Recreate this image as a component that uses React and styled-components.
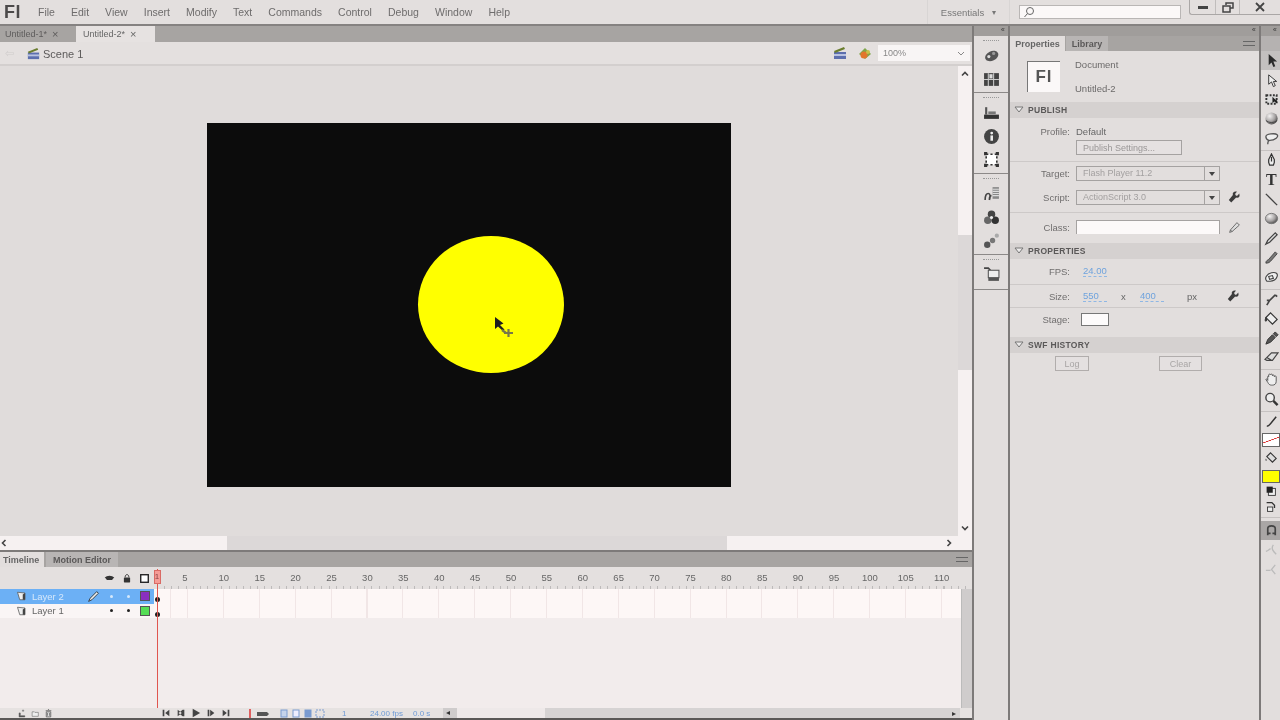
import React from "react";
import styled, { createGlobalStyle } from "styled-components";

const Global = createGlobalStyle`
	html, body { margin: 0; padding: 0; background: #e2dedd; overflow: hidden; }
	* { box-sizing: border-box; }
`;

const MENU = ["File", "Edit", "View", "Insert", "Modify", "Text", "Commands", "Control", "Debug", "Window", "Help"];
const RULER = [5, 10, 15, 20, 25, 30, 35, 40, 45, 50, 55, 60, 65, 70, 75, 80, 85, 90, 95, 100, 105, 110];

const Svg = ({ s = 16, children }) => (
	<svg width={s} height={s} viewBox="0 0 16 16">
		<defs>
			<radialGradient id="ball" cx="35%" cy="30%" r="75%">
				<stop offset="0" stopColor="#f4f2f2" />
				<stop offset="0.6" stopColor="#a5a2a2" />
				<stop offset="1" stopColor="#4a4848" />
			</radialGradient>
		</defs>
		{children}
	</svg>
);

const ICONS = {
	arrow: <path d="M5 1v12l3-3 2 5 2-1-2-5h4z" fill="#2a2a2a" />,
	sub: <path d="M5 2v10l3-2.500 2 5 2-1-2-4.500h3.500z" fill="#eee" stroke="#333" />,
	free: (
		<>
			<rect x="2.500" y="3.500" width="11" height="9" fill="#ddd" stroke="#333" strokeDasharray="2 1.500" strokeWidth="2" />
			<path d="M9 5v7l2-2 3 2 0-3-2-1z" fill="#222" />
		</>
	),
	sphere: (
		<>
			<circle cx="8" cy="8" r="6.500" fill="url(#ball)" />
			<path d="M2 10c3 3 9 3 12 0" stroke="#444" fill="none" />
		</>
	),
	lasso: <path d="M2 6c0-3 10-4 12-2s-2 6-8 6c-1 0-2 1-2 4M2 6c0 2 1 3 3 4" fill="#eee" stroke="#555" strokeWidth="1.400" />,
	pen: <path d="M8 1l3 6 0 3-1 3H6l-1-3 0-3zM8 4v5" fill="#eee" stroke="#333" strokeWidth="1.300" />,
	line: <path d="M2 2l12 12" stroke="#444" strokeWidth="1.500" />,
	oval: <ellipse cx="8" cy="8" rx="6.500" ry="5.500" fill="url(#ball)" stroke="#777" />,
	pencil: <path d="M2 14l2-4 8-8 2 2-8 8zM2 14l2-4" fill="#ddd" stroke="#444" strokeWidth="1.300" />,
	brush: <path d="M2 14c0-3 2-3 3-4l7-8 2 2-7 8c-1 1-2 2-5 2z" fill="#777" stroke="#444" />,
	deco: <path d="M3 13c-3-3 0-8 5-9s7 1 6 4-4 5-8 5zM5 8l4-1 1 3-4 1z" fill="#eee" stroke="#444" strokeWidth="1.200" />,
	bone: <path d="M3 14l3-5 6-6M6 9l-3 0M12 3l2 2" fill="none" stroke="#444" strokeWidth="1.800" />,
	bucket: (
		<>
			<path d="M7 2l7 7-5 5-7-7z" fill="#eee" stroke="#333" strokeWidth="1.300" />
			<path d="M2 7c-1 2-1 4 0 4s1-2 0-4" fill="#333" stroke="#333" />
		</>
	),
	dropper: <path d="M2 14l2-5 5-5 3 3-5 5zM10 3l2-2 3 3-2 2z" fill="#555" stroke="#333" />,
	eraser: <path d="M1 10l7-7h7l-6 8H3zM3 8l5 3" fill="#ddd" stroke="#444" strokeWidth="1.200" />,
	hand: <path d="M4 9V5c0-1 1-1 1 0V3c0-1 2-1 2 0v0c0-1 2-1 2 0v1c0-1 2-1 2 0v1c0-1 2-1 2 0v5c0 3-2 4-4 4H8c-2 0-3-1-4-3L2 8c0-1 1-1 2 1z" fill="#eee" stroke="#555" />,
	zoom: (
		<>
			<circle cx="6.500" cy="6" r="4.500" fill="#eee" stroke="#444" strokeWidth="1.500" />
			<path d="M10 9.500l4.500 4.500" stroke="#333" strokeWidth="2.500" />
		</>
	),
	strokePen: <path d="M3 13c3 0 3-2 5-4l5-6" stroke="#333" strokeWidth="1.600" fill="none" />,
	fillPot: (
		<>
			<path d="M7 3l6 6-4 4-6-6z" fill="#ddd" stroke="#333" strokeWidth="1.200" />
			<path d="M2 9c-1 2 0 3 1 2z" fill="#333" />
		</>
	),
	bw: (
		<>
			<rect x="5" y="5" width="8" height="8" fill="#eee" stroke="#333" />
			<rect x="3" y="3" width="7" height="7" fill="#222" />
		</>
	),
	swap: (
		<>
			<path d="M3 3h6l3 3v3" fill="none" stroke="#333" strokeWidth="1.500" />
			<rect x="4" y="8" width="6" height="5" fill="#eee" stroke="#333" />
		</>
	),
	magnet: <path d="M4 13V6c0-4 8-4 8 0v7M4 11h3M9 11h3" fill="none" stroke="#444" strokeWidth="1.800" />,
	smooth: <path d="M2 10c3-1 3-2 5-3M10 3c-3 4 0 7 3 10" fill="none" stroke="#bbb" strokeWidth="1.400" />,
	straight: <path d="M2 9h5M12 3L8 8l4 5" fill="none" stroke="#bbb" strokeWidth="1.400" />,
	palette: (
		<>
			<ellipse cx="8" cy="8.500" rx="6.500" ry="4.500" fill="#555" transform="rotate(-25 8 8)" />
			<circle cx="5.500" cy="9" r="1.500" fill="#ddd" />
			<circle cx="10" cy="6" r="1.500" fill="#999" />
		</>
	),
	grid: (
		<>
			<rect x="1" y="2" width="14" height="12" fill="#444" />
			<path d="M5 2v12M10 2v12M1 8h14" stroke="#ccc" />
			<rect x="6" y="3" width="3" height="4" fill="#ddd" />
		</>
	),
	align: (
		<>
			<rect x="1" y="10" width="14" height="4" fill="#333" />
			<rect x="2" y="3" width="2" height="7" fill="#555" />
			<rect x="5" y="7" width="7" height="2.500" fill="#777" />
		</>
	),
	info: (
		<>
			<circle cx="8" cy="8" r="7" fill="#444" />
			<rect x="7" y="7" width="2.400" height="5" fill="#eee" />
			<circle cx="8.200" cy="4.800" r="1.300" fill="#eee" />
		</>
	),
	transform: (
		<>
			<rect x="3" y="3" width="10" height="10" fill="#fff" stroke="#333" strokeDasharray="2 2" strokeWidth="1.500" />
			<path d="M1 1h3v3H1zM12 1h3v3h-3zM1 12h3v3H1zM12 12h3v3h-3z" fill="#333" />
		</>
	),
	code: (
		<>
			<rect x="9" y="2" width="6" height="11" fill="#888" />
			<path d="M9 4h6M9 6h6M9 8h6M9 10h6" stroke="#ddd" />
			<path d="M2 14c0-4 1-6 3-6s2 3 1 6M6 14c0-3 1-4 2-4" fill="none" stroke="#444" strokeWidth="1.500" />
		</>
	),
	cluster: (
		<>
			<circle cx="8" cy="5" r="3.500" fill="#444" />
			<circle cx="4.500" cy="10.500" r="3.500" fill="#666" />
			<circle cx="11.500" cy="10.500" r="3.500" fill="#333" />
			<circle cx="8" cy="8" r="1.500" fill="#eee" />
		</>
	),
	nodes: (
		<>
			<circle cx="4" cy="12" r="3" fill="#555" />
			<circle cx="9" cy="8" r="2.500" fill="#777" />
			<circle cx="13" cy="3.500" r="2" fill="#aaa" />
		</>
	),
	folder: (
		<>
			<path d="M1 2h4l2 2" fill="none" stroke="#444" strokeWidth="1.500" />
			<rect x="5" y="4" width="10" height="7" fill="#eee" stroke="#555" />
			<rect x="5" y="11" width="10" height="3" fill="#555" />
		</>
	),
	clapper: (
		<>
			<rect x="2" y="7" width="12" height="7" fill="#5d6fae" />
			<rect x="2" y="9" width="12" height="2" fill="#b9c2e0" />
			<path d="M2 6l10-4 1 2-10 4z" fill="#6a7d2e" />
		</>
	),
	symbol: (
		<>
			<path d="M2 9l6-6 6 6-6 5z" fill="#7fa64a" />
			<circle cx="7" cy="10" r="3.500" fill="#e2762c" />
			<circle cx="11" cy="7" r="2" fill="#c9c04a" />
		</>
	),
	wrench: <path d="M14 3l-3 3-2-1V3l2-2c-3-1-6 1-5 4l-5 6 3 3 6-6c3 1 5-1 4-4z" fill="#3c3c3c" />,
	dropperSmall: <path d="M2 14l1-3 8-9 3 3-9 8zM3 11l2 2" fill="#ddd" stroke="#555" />,
	layer: (
		<>
			<path d="M2 3l10 1v9H5z" fill="#eee" stroke="#555" />
			<path d="M12 4v9H9V6z" fill="#444" />
		</>
	),
	penSmall: <path d="M2 14l2-4 8-8 2 2-8 8z" fill="#eee" stroke="#222" />,
	eye: <path d="M1 7c3-4 11-4 14 0-2 1-3 3-3 3H4S3 8 1 7z" fill="#333" />,
	lock: (
		<>
			<rect x="3" y="7" width="10" height="8" rx="1" fill="#333" />
			<path d="M5 7c0-6 6-6 6 0" stroke="#333" strokeWidth="1.500" fill="none" />
		</>
	),
	outline: <rect x="2.500" y="2.500" width="11" height="11" fill="#fff" stroke="#222" strokeWidth="2" />,
	newLayer: <path d="M2 14V7h2v5h8v2zM7 3h4M9 1v4" fill="#555" stroke="#555" />,
	newFolder: <path d="M2 5h4l1 1h6v7H2z" fill="#eee" stroke="#666" />,
	trash: <path d="M4 5h8v9H4zM3 3h10M7 1h2M6 7v5M10 7v5" fill="#ddd" stroke="#555" strokeWidth="1.300" />,
};

const TOOLS = [
	["arrow", "sub", "free", "sphere", "lasso"],
	["pen", "T", "line", "oval", "pencil", "brush", "deco"],
	["bone", "bucket", "dropper", "eraser"],
	["hand", "zoom"],
];

const TRANSPORT = [
	"M2 2h2v8H2zM10 2v8L5 6z",
	"M2 2v8L7 6zM8 2v8L3 6zM8 2h2v8H8z",
	"M2 1v10l9-5z",
	"M2 2h2v8H2zM5 2v8l5-4z",
	"M2 2v8l5-4zM8 2h2v8H8z",
];

const Icon = ({ name, s }) => <Svg s={s}>{ICONS[name]}</Svg>;

const Chevron = () => (
	<svg width="10" height="7" viewBox="0 0 10 7">
		<path d="M1 1h8L5 6z" fill="#eceaea" stroke="#777" />
	</svg>
);

const ScrollChevron = ({ rotate = 0 }) => (
	<svg width="8" height="8" viewBox="0 0 8 8" style={{ transform: `rotate(${rotate}deg)` }}>
		<path d="M1 5.500l3-3 3 3" fill="none" stroke="#444" strokeWidth="1.600" />
	</svg>
);

const Section = ({ title }) => (
	<SectionHead>
		<Chevron />
		{title}
	</SectionHead>
);

const Select = ({ children }) => (
	<SelectBox>
		{children}
		<SelectArrow />
	</SelectBox>
);

const LayerLine = ({ name, color, selected }) => (
	<LayerRow $selected={selected}>
		<Icon name="layer" s={12} />
		<LayerName>{name}</LayerName>
		<PenSlot>{selected && <Icon name="penSmall" s={13} />}</PenSlot>
		<DotCell><LayerDot $selected={selected} /></DotCell>
		<DotCell><LayerDot $selected={selected} /></DotCell>
		<LayerColor $color={color} />
	</LayerRow>
);

export default function App() {
	return (
		<Page>
			<Global />
			<MenuBar>
				<Logo>Fl</Logo>
				{MENU.map((m) => (
					<MenuItem key={m}>{m}</MenuItem>
				))}
				<Spacer />
				<Workspace>
					Essentials <small>▾</small>
				</Workspace>
				<SearchBox>
					<svg width="12" height="12" viewBox="0 0 12 12">
						<circle cx="7" cy="5" r="3.500" fill="none" stroke="#666" />
						<path d="M4.500 7.500L1.500 11" stroke="#666" />
					</svg>
				</SearchBox>
				<WindowButtons>
					<WinBtn $w={26}>
						<svg width="10" height="4"><rect width="10" height="3" y="1" fill="#444" /></svg>
					</WinBtn>
					<WinBtn $w={24}>
						<svg width="12" height="11" viewBox="0 0 12 11">
							<path d="M4 3V1h7v5H8" fill="none" stroke="#444" strokeWidth="1.500" />
							<rect x="1" y="4" width="7" height="6" fill="none" stroke="#444" strokeWidth="1.500" />
						</svg>
					</WinBtn>
					<WinBtn $w={41}>
						<svg width="10" height="10" viewBox="0 0 10 10">
							<path d="M1 1l8 8M9 1l-8 8" stroke="#444" strokeWidth="1.800" />
						</svg>
					</WinBtn>
				</WindowButtons>
			</MenuBar>

			<Main>
				<LeftColumn>
					<DocTabs>
						<DocTab>Untitled-1* <b>×</b></DocTab>
						<DocTab $active>Untitled-2* <b>×</b></DocTab>
					</DocTabs>
					<SceneBar>
						<BackArrow>⇦</BackArrow>
						<Icon name="clapper" s={15} />
						<SceneName>Scene 1</SceneName>
						<Spacer />
						<Icon name="clapper" s={16} />
						<SceneGap />
						<Icon name="symbol" s={16} />
						<ZoomBox>
							100%
							<svg width="8" height="5" viewBox="0 0 8 5">
								<path d="M1 1l3 3 3-3" fill="none" stroke="#888" />
							</svg>
						</ZoomBox>
					</SceneBar>
					<Canvas>
						<Pasteboard>
							<Stage>
								<Circle />
								<Cursor>
									<svg width="24" height="24" viewBox="0 0 24 24">
										<path d="M1 1v12l3-2.500 5 4.500 1.500-1.500-4.500-4.500 3.500-1.500z" fill="#1e1e1e" />
										<path d="M8 14l4 3M10 17h9M14.500 13v8" stroke="#77774a" strokeWidth="2.200" />
									</svg>
								</Cursor>
							</Stage>
						</Pasteboard>
						<VScroll>
							<ScrollCap><ScrollChevron /></ScrollCap>
							<VThumb />
							<ScrollCap $end><ScrollChevron rotate={180} /></ScrollCap>
						</VScroll>
						<HScroll>
							<HCap><ScrollChevron rotate={-90} /></HCap>
							<HThumb />
							<HCap $end><ScrollChevron rotate={90} /></HCap>
						</HScroll>
						<Corner />
					</Canvas>

					<Timeline>
						<PanelTabs>
							<PanelTab $active>Timeline</PanelTab>
							<PanelTab>Motion Editor</PanelTab>
							<Spacer />
							<PanelMenu />
						</PanelTabs>
						<RulerRow>
							<LayerHead>
								<Icon name="eye" s={11} />
								<Icon name="lock" s={10} />
								<Icon name="outline" s={11} />
							</LayerHead>
							<Ruler>
								{RULER.map((n) => (
									<RulerLabel key={n}>{n}</RulerLabel>
								))}
							</Ruler>
						</RulerRow>
						<TimelineBody>
							<Layers>
								<LayerLine name="Layer 2" color="#8a2fc0" selected />
								<LayerLine name="Layer 1" color="#55dd55" />
							</Layers>
							<Frames>
								<FrameRow><Keyframe /></FrameRow>
								<FrameRow><Keyframe /></FrameRow>
							</Frames>
							<TimelineScroll />
							<Playhead><PlayheadLabel>1</PlayheadLabel></Playhead>
						</TimelineBody>
						<TimelineBar>
							<BarIcons>
								<Icon name="newLayer" s={9} />
								<Icon name="newFolder" s={9} />
								<Icon name="trash" s={9} />
							</BarIcons>
							<Transport>
								{TRANSPORT.map((d) => (
									<svg key={d} width="12" height="10" viewBox="0 0 12 12">
										<path d={d} fill="#444" />
									</svg>
								))}
							</Transport>
							<OnionIcons>
								<svg width="80" height="11" viewBox="0 0 80 11">
									<path d="M2 1v9" stroke="#d33" strokeWidth="1.500" />
									<path d="M9 4h10l2 2-2 2H9z" fill="#555" />
									<rect x="33" y="2" width="6" height="7" fill="#c5d3ea" stroke="#7b9bd0" />
									<rect x="45" y="2" width="6" height="7" fill="#eef" stroke="#7b9bd0" />
									<rect x="57" y="2" width="6" height="7" fill="#7b9bd0" stroke="#7b9bd0" />
									<rect x="68" y="2" width="8" height="7" fill="none" stroke="#7b9bd0" strokeDasharray="2 1" />
								</svg>
							</OnionIcons>
							<BlueText $w={28}>1</BlueText>
							<BlueText $w={43}>24.00 fps</BlueText>
							<BlueText $w={30}>0.0 s</BlueText>
							<BarScroll>
								<BarArrow>◂</BarArrow>
								<BarThumb />
								<Spacer />
								<BarEnd>▸</BarEnd>
							</BarScroll>
						</TimelineBar>
					</Timeline>
				</LeftColumn>

				<Dock>
					<DockStrip>‹‹</DockStrip>
					<DockGroup $h={57}>
						<Grip />
						<DockIcon><Icon name="palette" s={17} /></DockIcon>
						<DockIcon><Icon name="grid" s={17} /></DockIcon>
					</DockGroup>
					<DockGroup $h={81}>
						<Grip />
						<DockIcon><Icon name="align" s={17} /></DockIcon>
						<DockIcon><Icon name="info" s={17} /></DockIcon>
						<DockIcon><Icon name="transform" s={17} /></DockIcon>
					</DockGroup>
					<DockGroup $h={81}>
						<Grip />
						<DockIcon><Icon name="code" s={17} /></DockIcon>
						<DockIcon><Icon name="cluster" s={17} /></DockIcon>
						<DockIcon><Icon name="nodes" s={17} /></DockIcon>
					</DockGroup>
					<DockGroup $h={35}>
						<Grip />
						<DockIcon><Icon name="folder" s={17} /></DockIcon>
					</DockGroup>
				</Dock>

				<Properties>
					<DockStrip>‹‹</DockStrip>
					<PanelTabs>
						<PropTab $active>Properties</PropTab>
						<PropTab>Library</PropTab>
						<Spacer />
						<PanelMenu />
					</PanelTabs>
					<DocHeader>
						<FlBadge>Fl</FlBadge>
						<DocInfo>
							<span>Document</span>
							<span>Untitled-2</span>
						</DocInfo>
					</DocHeader>
					<Section title="PUBLISH" />
					<FormBlock $h={44} $pad={5}>
						<FormRow $h={16}>
							<Label>Profile:</Label>
							<Plain>Default</Plain>
						</FormRow>
						<FormRow $h={17}>
							<Label />
							<PropButton $w={106}>Publish Settings...</PropButton>
						</FormRow>
					</FormBlock>
					<FormBlock $h={51}>
						<FormRow $h={22}>
							<Label>Target:</Label>
							<Select>Flash Player 11.2</Select>
						</FormRow>
						<FormRow $h={26}>
							<Label>Script:</Label>
							<Select>ActionScript 3.0</Select>
							<Trailing><Icon name="wrench" s={13} /></Trailing>
						</FormRow>
					</FormBlock>
					<FormBlock $h={30} $plain>
						<FormRow $h={28}>
							<Label>Class:</Label>
							<ClassInput />
							<Trailing><Icon name="dropperSmall" s={13} /></Trailing>
						</FormRow>
					</FormBlock>
					<Section title="PROPERTIES" />
					<FormBlock $h={26}>
						<FormRow $h={24}>
							<Label>FPS:</Label>
							<Link>24.00</Link>
						</FormRow>
					</FormBlock>
					<FormBlock $h={23}>
						<FormRow $h={22}>
							<Label>Size:</Label>
							<Link>550</Link>
							<Times>x</Times>
							<Link $near>400</Link>
							<Unit>px</Unit>
							<Trailing $wide><Icon name="wrench" s={13} /></Trailing>
						</FormRow>
					</FormBlock>
					<FormBlock $h={29} $plain>
						<FormRow $h={22}>
							<Label>Stage:</Label>
							<StageSwatch />
						</FormRow>
					</FormBlock>
					<Section title="SWF HISTORY" />
					<HistoryRow>
						<PropButton $w={34} $faint>Log</PropButton>
						<PropButton $w={43} $faint>Clear</PropButton>
					</HistoryRow>
				</Properties>

				<Tools>
					<DockStrip>‹‹</DockStrip>
					<ToolsHead />
					{TOOLS.map((group, i) => (
						<ToolGroup key={i}>
							{group.map((t, j) => (
								<ToolCell key={t} $active={i === 0 && j === 0}>
									{t === "T" ? <TextTool>T</TextTool> : <Icon name={t} s={15} />}
								</ToolCell>
							))}
						</ToolGroup>
					))}
					<ToolGroup>
						<ToolCell><Icon name="strokePen" s={15} /></ToolCell>
						<StrokeSwatch />
						<ToolCell><Icon name="fillPot" s={15} /></ToolCell>
						<FillSwatch />
						<ToolCell $h={16}><Icon name="bw" s={14} /></ToolCell>
						<ToolCell $h={16}><Icon name="swap" s={14} /></ToolCell>
					</ToolGroup>
					<SnapGroup>
						<SnapCell><Icon name="magnet" s={15} /></SnapCell>
						<ToolCell><Icon name="smooth" s={15} /></ToolCell>
						<ToolCell><Icon name="straight" s={15} /></ToolCell>
					</SnapGroup>
				</Tools>
			</Main>
		</Page>
	);
}

const font = `"Liberation Sans", Arial, sans-serif`;

const Page = styled.div`
	width: 1280px;
	height: 720px;
	display: flex;
	flex-direction: column;
	overflow: hidden;
	background: #e2dedd;
	font-family: ${font};
	font-size: 10px;
	color: #666;
	filter: blur(0.55px);
`;

const Spacer = styled.div`
	flex: 1;
`;

const MenuBar = styled.div`
	height: 26px;
	flex: none;
	display: flex;
	align-items: center;
	background: #e3dfde;
	border-bottom: 2px solid #858281;
	padding-left: 4px;
`;

const Logo = styled.div`
	width: 34px;
	font-size: 18px;
	font-weight: bold;
	letter-spacing: 0.5px;
	color: #4c4a4a;
`;

const MenuItem = styled.div`
	font-size: 10.500px;
	color: #6e6c6c;
	margin-right: 16.050px;
`;

const Workspace = styled.div`
	width: 83px;
	height: 24px;
	display: flex;
	align-items: center;
	justify-content: center;
	gap: 8px;
	font-size: 9.500px;
	color: #777;
	border-left: 1px solid #d8d5d4;
	border-right: 1px solid #d8d5d4;
	margin-right: 9px;

	small {
		font-size: 8px;
	}
`;

const SearchBox = styled.div`
	width: 162px;
	height: 14px;
	background: #fbf8f8;
	border: 1px solid #b9b6b5;
	display: flex;
	align-items: center;
	padding-left: 3px;
	margin-right: 8px;
`;

const WindowButtons = styled.div`
	display: flex;
	align-self: flex-start;
	height: 15px;
	width: 91px;
	border: 1px solid #aaa7a6;
	border-top: none;
	border-right: none;
	border-radius: 0 0 0 3px;
`;

const WinBtn = styled.div`
	width: ${(p) => p.$w}px;
	flex: none;
	display: flex;
	align-items: center;
	justify-content: center;
	border-right: 1px solid #c0bdbc;
`;

const Main = styled.div`
	flex: 1;
	display: flex;
	min-height: 0;
	background: #7d7a79;
	gap: 2px;
`;

const LeftColumn = styled.div`
	width: 972px;
	flex: none;
	display: flex;
	flex-direction: column;
	background: #e2dedd;
`;

const DocTabs = styled.div`
	height: 16px;
	flex: none;
	display: flex;
	background: #a7a4a2;
	font-size: 9px;
`;

const DocTab = styled.div`
	width: ${(p) => (p.$active ? "79px" : "76px")};
	padding-left: ${(p) => (p.$active ? "7px" : "5px")};
	display: flex;
	align-items: center;
	justify-content: flex-start;
	gap: 5px;
	color: ${(p) => (p.$active ? "#666" : "#5e5c5c")};
	background: ${(p) => (p.$active ? "#e6e2e1" : "#a7a4a2")};

	b {
		font-weight: normal;
		font-size: 11px;
	}
`;

const SceneBar = styled.div`
	height: 24px;
	flex: none;
	display: flex;
	align-items: center;
	padding-left: 5px;
	border-bottom: 2px solid #d3cfce;
	background: #e4e0df;
`;

const BackArrow = styled.div`
	width: 21px;
	color: #d0cdcc;
	font-size: 11px;
`;

const SceneName = styled.div`
	margin: 1px 0 0 2px;
	font-size: 11px;
	color: #5c5a5a;
`;

const SceneGap = styled.div`
	width: 9px;
`;

const ZoomBox = styled.div`
	width: 92px;
	height: 16px;
	margin: 0 2px 0 5px;
	padding: 0 5px;
	display: flex;
	align-items: center;
	justify-content: space-between;
	background: #f8f5f5;
	font-size: 9px;
	color: #888;
`;

const Canvas = styled.div`
	height: 484px;
	flex: none;
	display: grid;
	grid-template-columns: 958px 14px;
	grid-template-rows: 470px 14px;
	background: #e0dcdb;
`;

const Pasteboard = styled.div`
	padding: 57px 0 0 207px;
`;

const Stage = styled.div`
	width: 524px;
	height: 364px;
	background: #0c0c0c;
	position: relative;
`;

const Circle = styled.div`
	position: absolute;
	left: 211px;
	top: 113px;
	width: 146px;
	height: 137px;
	border-radius: 50%;
	background: #ffff00;
`;

const Cursor = styled.div`
	position: absolute;
	left: 287px;
	top: 193px;
	height: 24px;
`;

const VScroll = styled.div`
	background: #f6f1f1;
	display: flex;
	flex-direction: column;
	align-items: stretch;
`;

const ScrollCap = styled.div`
	height: 16px;
	flex: none;
	display: flex;
	align-items: center;
	justify-content: center;
	margin-top: ${(p) => (p.$end ? "auto" : "0")};
`;

const VThumb = styled.div`
	height: 135px;
	margin-top: 153px;
	background: #dcd8d8;
`;

const HScroll = styled.div`
	background: #f6f1f1;
	display: flex;
	align-items: center;
`;

const HCap = styled.div`
	width: 8px;
	flex: none;
	display: flex;
	margin-left: ${(p) => (p.$end ? "auto" : "0")};
	margin-right: ${(p) => (p.$end ? "5px" : "0")};
`;

const HThumb = styled.div`
	width: 500px;
	height: 14px;
	margin-left: 219px;
	background: #dcd8d8;
`;

const Corner = styled.div`
	background: #f6f1f1;
`;

const Timeline = styled.div`
	flex: 1;
	min-height: 0;
	display: flex;
	flex-direction: column;
	border-top: 2px solid #7d7a79;
	background: #f2ecec;
`;

const PanelTabs = styled.div`
	height: 15px;
	flex: none;
	display: flex;
	background: #a7a4a2;
`;

const PanelTab = styled.div`
	padding: 0 ${(p) => (p.$active ? "3px" : "7px")};
	min-width: ${(p) => (p.$active ? "44px" : "72px")};
	margin-left: ${(p) => (p.$active ? "0" : "2px")};
	display: flex;
	align-items: center;
	font-size: 9px;
	font-weight: bold;
	color: ${(p) => (p.$active ? "#666" : "#5a5858")};
	background: ${(p) => (p.$active ? "#e2dedd" : "#b8b5b4")};
`;

const PanelMenu = styled.div`
	width: 12px;
	height: 5px;
	margin: 5px 4px 0 0;
	border-top: 1px solid #666;
	border-bottom: 1px solid #666;
`;

const RulerRow = styled.div`
	height: 22px;
	flex: none;
	display: flex;
	background: #e4e0df;
`;

const LayerHead = styled.div`
	width: 154px;
	flex: none;
	display: flex;
	align-items: center;
	justify-content: flex-end;
	gap: 7px;
	padding: 0 4px 0 0;
`;

const Ruler = styled.div`
	flex: 1;
	display: flex;
	padding: 5px 0 0 16px;
	font-size: 9.500px;
	color: #666;
	background-image: repeating-linear-gradient(90deg, #bdbaba 0 1px, transparent 1px 7.150px);
	background-size: 100% 3px;
	background-position: 3px bottom;
	background-repeat: no-repeat;
`;

const RulerLabel = styled.div`
	width: 35.900px;
	flex: none;
	text-align: center;

	&:first-child {
		text-indent: -6px;
	}
`;

const TimelineBody = styled.div`
	flex: 1;
	min-height: 0;
	display: flex;
	position: relative;
`;

const Layers = styled.div`
	width: 154px;
	flex: none;
`;

const LayerRow = styled.div`
	height: 14.500px;
	display: flex;
	align-items: center;
	padding-left: 16px;
	background: ${(p) => (p.$selected ? "#6cb0f5" : "#faf5f5")};
	color: ${(p) => (p.$selected ? "#d5e8fb" : "#666")};
`;

const LayerName = styled.div`
	width: 55px;
	margin-left: 4px;
	font-size: 9.500px;
`;

const PenSlot = styled.div`
	width: 16px;
	display: flex;
`;

const DotCell = styled.div`
	width: 17px;
	display: flex;
	justify-content: center;
`;

const LayerDot = styled.div`
	width: 3px;
	height: 3px;
	border-radius: 50%;
	background: ${(p) => (p.$selected ? "#d5e8fb" : "#222")};
`;

const LayerColor = styled.div`
	width: 10px;
	height: 10px;
	margin-left: 3px;
	border: 1px solid #555;
	background: ${(p) => p.$color};
`;

const Frames = styled.div`
	width: 807px;
	flex: none;
`;

const FrameRow = styled.div`
	height: 14.500px;
	background-color: #fdf7f6;
	background-image: repeating-linear-gradient(90deg, #f1e6e6 0 1px, transparent 1px 35.900px);
	background-position: 33px 0;
	position: relative;
`;

const Keyframe = styled.div`
	position: absolute;
	left: 1px;
	top: 8px;
	width: 5px;
	height: 5px;
	border-radius: 50%;
	background: #222;
`;

const TimelineScroll = styled.div`
	width: 11px;
	flex: none;
	background: #cfcccc;
	border-left: 1px solid #bbb;
`;

const Playhead = styled.div`
	position: absolute;
	left: 156.500px;
	top: -20px;
	bottom: 0;
	width: 1.500px;
	background: #e0564f;
`;

const PlayheadLabel = styled.div`
	position: absolute;
	left: -3px;
	top: 1px;
	width: 7px;
	height: 14px;
	background: #f59b96;
	border: 1px solid #d96a64;
	font-size: 8px;
	line-height: 12px;
	text-align: center;
	color: #844;
`;

const TimelineBar = styled.div`
	height: 12px;
	flex: none;
	display: flex;
	align-items: center;
	background: #e6e2e1;
	border-bottom: 2px solid #5a5857;
	padding-left: 18px;
	color: #666;
`;

const BarIcons = styled.div`
	display: flex;
	gap: 4px;
	width: 142px;
`;

const Transport = styled.div`
	display: flex;
	gap: 3px;
	width: 88px;
`;

const OnionIcons = styled.div`
	width: 94px;
	display: flex;
`;

const BlueText = styled.div`
	width: ${(p) => p.$w}px;
	color: #6f9bd6;
	font-size: 8px;
	white-space: nowrap;
`;

const BarScroll = styled.div`
	width: 517px;
	height: 10px;
	margin-left: auto;
	margin-right: 12px;
	display: flex;
	align-items: center;
	background: #d6d3d3;
	font-size: 8px;
	color: #333;
`;

const BarArrow = styled.div`
	width: 14px;
	height: 10px;
	line-height: 10px;
	padding-left: 3px;
	background: #cfcccc;
`;

const BarThumb = styled.div`
	width: 88px;
	height: 10px;
	background: #eee9e9;
`;

const BarEnd = styled.div`
	padding-right: 4px;
`;

const Dock = styled.div`
	width: 34px;
	flex: none;
	display: flex;
	flex-direction: column;
	background: #e2dedd;
`;

const DockStrip = styled.div`
	height: 10px;
	flex: none;
	padding-right: 4px;
	background: #a09d9b;
	font-size: 8px;
	line-height: 8px;
	letter-spacing: -1px;
	text-align: right;
	color: #444;
`;

const DockGroup = styled.div`
	height: ${(p) => p.$h}px;
	flex: none;
	display: flex;
	flex-direction: column;
	align-items: center;
	border-bottom: 1px solid #8c8988;
`;

const Grip = styled.div`
	width: 16px;
	height: 1px;
	margin: 4px 0 3px;
	border-top: 1px dotted #999;
`;

const DockIcon = styled.div`
	height: 23.500px;
	display: flex;
	align-items: center;
	justify-content: center;
`;

const Properties = styled.div`
	width: 249px;
	flex: none;
	display: flex;
	flex-direction: column;
	background: #e2dedd;
`;

const PropTab = styled.div`
	width: ${(p) => (p.$active ? "55px" : "42px")};
	margin-right: 1px;
	display: flex;
	align-items: center;
	justify-content: center;
	font-size: 9px;
	font-weight: bold;
	color: ${(p) => (p.$active ? "#666" : "#5a5858")};
	background: ${(p) => (p.$active ? "#e2dedd" : "#b8b5b4")};
`;

const DocHeader = styled.div`
	height: 51px;
	flex: none;
	display: flex;
	padding: 10px 0 0 17px;
`;

const FlBadge = styled.div`
	width: 33px;
	height: 31px;
	display: flex;
	align-items: center;
	justify-content: center;
	background: #fbf8f8;
	border-top: 1px solid #777;
	border-left: 1px solid #777;
	font-size: 17px;
	font-weight: bold;
	letter-spacing: 1px;
	color: #555;
`;

const DocInfo = styled.div`
	display: flex;
	flex-direction: column;
	gap: 12px;
	margin-left: 15px;
	font-size: 9.500px;
	line-height: 12px;
	color: #6c6a6a;
	margin-top: -2px;
`;

const SectionHead = styled.div`
	height: 16px;
	flex: none;
	display: flex;
	align-items: center;
	gap: 4px;
	padding: 0 0 1px 4px;
	background: #d5d1d0;
	font-size: 8.500px;
	font-weight: bold;
	letter-spacing: 0.3px;
	color: #5a5858;
`;

const FormBlock = styled.div`
	height: ${(p) => p.$h}px;
	flex: none;
	padding-top: ${(p) => p.$pad || 0}px;
	border-bottom: ${(p) => (p.$plain ? "none" : "1px solid #cdc9c8")};
`;

const FormRow = styled.div`
	height: ${(p) => p.$h}px;
	display: flex;
	align-items: center;
`;

const Label = styled.div`
	width: 60px;
	flex: none;
	text-align: right;
	font-size: 9.500px;
	color: #706e6e;
	margin-right: 6px;
`;

const Plain = styled.div`
	font-size: 9.500px;
	color: #666;
`;

const PropButton = styled.div`
	width: ${(p) => p.$w}px;
	height: 15px;
	display: flex;
	align-items: center;
	justify-content: ${(p) => (p.$faint ? "center" : "flex-start")};
	padding-left: ${(p) => (p.$faint ? "0" : "6px")};
	border: 1px solid #a5a2a1;
	background: #e5e1e1;
	font-size: 9px;
	color: #9a9797;
	opacity: ${(p) => (p.$faint ? 0.8 : 1)};
`;

const SelectBox = styled.div`
	width: 144px;
	height: 15px;
	display: flex;
	align-items: center;
	padding-left: 6px;
	border: 1px solid #a5a2a1;
	font-size: 9px;
	color: #a3a0a0;
	position: relative;
`;

const SelectArrow = styled.div`
	position: absolute;
	right: 0;
	top: 0;
	bottom: 0;
	width: 15px;
	border-left: 1px solid #a5a2a1;

	&::after {
		content: "";
		position: absolute;
		left: 4px;
		top: 5px;
		border: 3px solid transparent;
		border-top: 4px solid #444;
	}
`;

const Trailing = styled.div`
	margin-left: ${(p) => (p.$wide ? "30px" : "8px")};
	display: flex;
`;

const ClassInput = styled.div`
	width: 144px;
	height: 14px;
	background: #fcf9f9;
	border: 1px solid #a5a2a1;
	border-bottom: none;
`;

const Link = styled.div`
	width: 24px;
	margin-left: ${(p) => (p.$near ? "5px" : "7px")};
	font-size: 9.500px;
	color: #6fa3dd;
	border-bottom: 1px dashed #8fb7e4;
	line-height: 10px;
`;

const Times = styled.div`
	width: 14px;
	margin-left: 14px;
	font-size: 9.500px;
`;

const Unit = styled.div`
	margin-left: 23px;
	font-size: 9.500px;
`;

const StageSwatch = styled.div`
	width: 28px;
	height: 13px;
	margin-left: 5px;
	background: #fdfbfb;
	border: 1px solid #777;
`;

const HistoryRow = styled.div`
	display: flex;
	gap: 70px;
	padding: 3px 0 0 45px;
`;

const Tools = styled.div`
	width: 19px;
	flex: none;
	display: flex;
	flex-direction: column;
	background: #e2dedd;
	overflow: hidden;
`;

const ToolsHead = styled.div`
	height: 15px;
	flex: none;
	background: #b5b2b1;
`;

const ToolGroup = styled.div`
	flex: none;
	padding-bottom: 2px;
	border-bottom: 1px solid #c6c2c1;
`;

const ToolCell = styled.div`
	height: ${(p) => p.$h || 19.4}px;
	display: flex;
	align-items: center;
	justify-content: flex-start;
	padding-left: 3px;
	background: ${(p) => (p.$active ? "#c3c0bf" : "transparent")};
`;

const TextTool = styled.div`
	font-family: "Liberation Serif", serif;
	font-weight: bold;
	font-size: 16px;
	color: #333;
	padding-left: 2px;
`;

const StrokeSwatch = styled.div`
	height: 14px;
	margin: 2px 0 0 1px;
	border: 1px solid #666;
	background: linear-gradient(160deg, #fff 47%, #d33 49%, #d33 52%, #fff 54%);
`;

const FillSwatch = styled.div`
	height: 13px;
	margin: 3px 0 0 1px;
	border: 1px solid #666;
	background: #ffff00;
`;

const SnapGroup = styled.div`
	padding-top: 3px;
`;

const SnapCell = styled(ToolCell)`
	background: #a9a6a5;
`;
